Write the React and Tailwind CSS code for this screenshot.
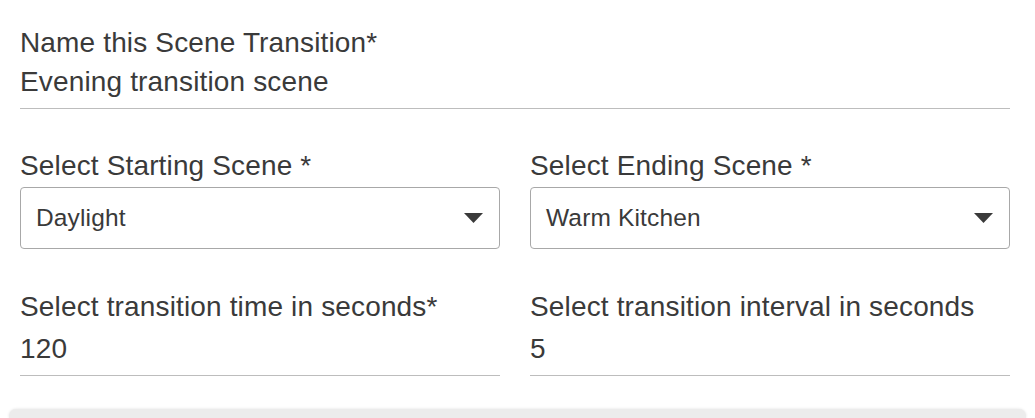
import React from "react";

function Arrow() {
  return (
    <svg width="19" height="10" viewBox="0 0 19 10" className="shrink-0">
      <path d="M0 0 L19 0 L9.5 10 Z" fill="#3a3a3a" />
    </svg>
  );
}

function SelectBox({ value }) {
  return (
    <div className="mt-[5px] h-[62px] border-[1.5px] border-[#a8a8a8] rounded-[4px] flex items-center justify-between pl-[15px] pr-[16px]">
      <span className="text-[24.5px] leading-[30px] text-[#3a3a3a]">{value}</span>
      <Arrow />
    </div>
  );
}

export default function App() {
  return (
    <div
      className="w-[1035px] h-[418px] bg-white overflow-hidden flex flex-col"
      style={{ fontFamily: '"Liberation Sans", Arial, Helvetica, sans-serif' }}
    >
      <div className="pl-[20px] pr-[25px] pt-[27px] text-[#3a3a3a] tracking-[0.15px]">
        <div className="border-b-[1.5px] border-[#bdbdbd] pb-[10px]">
          <div className="text-[28px] leading-[32px]">Name this Scene Transition*</div>
          <div className="mt-[7px] text-[28px] leading-[32px]">Evening transition scene</div>
        </div>

        <div className="mt-[41px] grid grid-cols-2 gap-x-[30px]">
          <div>
            <div className="text-[28px] leading-[32px]">Select Starting Scene *</div>
            <SelectBox value="Daylight" />
          </div>
          <div>
            <div className="text-[28px] leading-[32px]">Select Ending Scene *</div>
            <SelectBox value="Warm Kitchen" />
          </div>
        </div>

        <div className="mt-[42px] grid grid-cols-2 gap-x-[30px]">
          <div className="border-b-[1.5px] border-[#bdbdbd] pb-[10px]">
            <div className="text-[28px] leading-[32px]">Select transition time in seconds*</div>
            <div className="mt-[10px] text-[28px] leading-[32px]">120</div>
          </div>
          <div className="border-b-[1.5px] border-[#bdbdbd] pb-[10px]">
            <div className="text-[28px] leading-[32px]">Select transition interval in seconds</div>
            <div className="mt-[10px] text-[28px] leading-[32px]">5</div>
          </div>
        </div>
      </div>

      <div className="mt-[33px] ml-[9px] mr-[9px] flex-1 bg-[#ececec] rounded-t-[7px] shadow-[0_0_3px_rgba(0,0,0,0.12)]" />
    </div>
  );
}
